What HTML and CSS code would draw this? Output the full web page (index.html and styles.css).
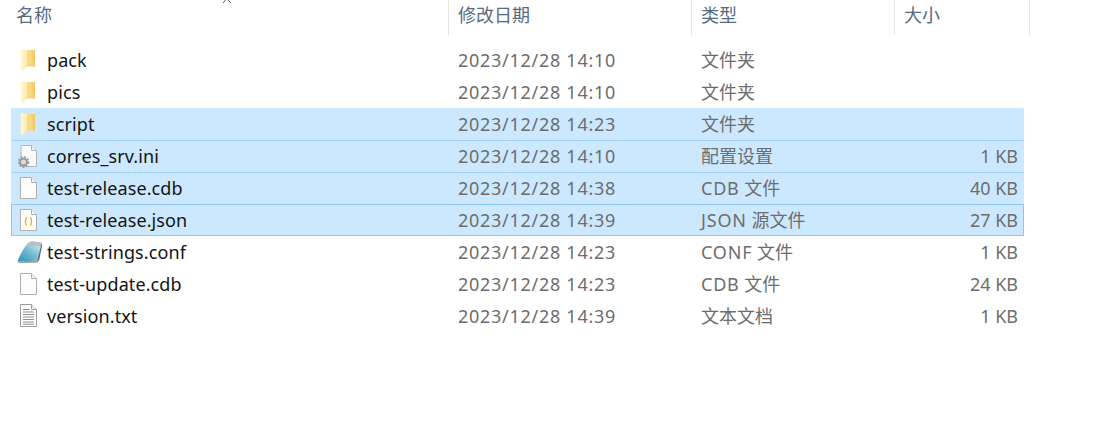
FILE: index.html
```html
<!DOCTYPE html>
<html lang="zh-CN">
<head>
<meta charset="utf-8">
<title>文件列表</title>
<link rel="stylesheet" href="styles.css">
</head>
<body>
<svg class="defs" width="0" height="0" aria-hidden="true">
  <defs>
    <linearGradient id="fold" x1="0" x2="1" y1="0" y2="0">
      <stop offset="0" stop-color="#fbe08f"/>
      <stop offset="0.6" stop-color="#f8d67c"/>
      <stop offset="1" stop-color="#f2c35c"/>
    </linearGradient>
    <linearGradient id="leaf" x1="0" x2="1" y1="0" y2="0">
      <stop offset="0" stop-color="#fff6d2"/>
      <stop offset="1" stop-color="#fde9a8"/>
    </linearGradient>
    <linearGradient id="note" x1="0" x2="1" y1="1" y2="0">
      <stop offset="0" stop-color="#2f8fb4"/>
      <stop offset="0.55" stop-color="#74bfd3"/>
      <stop offset="1" stop-color="#d5edf0"/>
    </linearGradient>
    <symbol id="i-folder" viewBox="0 0 20 24">
      <path d="M8 2h9v16.500H8z" fill="url(#fold)"/>
      <path d="M2.700 1.500h6l1 1v16l-1.500.6-3.200 3.900-2.300-1.500z" fill="url(#leaf)"/>
      <path d="M9.700 2.500v16" stroke="#f3d283" stroke-width=".7" fill="none"/>
    </symbol>
    <symbol id="i-page" viewBox="0 0 20 24">
      <path d="M2.500 1.500h11l5 5v16h-16z" fill="#fcfcfc" stroke="#aeaeae"/>
      <path d="M13.500 1.500v5h5" fill="#f2f2f2" stroke="#aeaeae"/>
    </symbol>
    <symbol id="i-ini" viewBox="0 0 20 24">
      <path d="M3 1.500h10.500l5 5v16H3z" fill="#fafafa" stroke="#b4b4b4"/>
      <path d="M13.500 1.500v5h5" fill="#eee" stroke="#b4b4b4"/>
      <circle cx="5.500" cy="18" r="4.800" fill="none" stroke="#a3a3a3" stroke-width="2.200" stroke-dasharray="2 1.200"/>
      <circle cx="5.500" cy="18" r="3.400" fill="#dcdcdc" stroke="#989898" stroke-width="1.800"/>
    </symbol>
    <symbol id="i-json" viewBox="0 0 20 24">
      <path d="M2.500 1.500h11l5 5v16h-16z" fill="#fffef6" stroke="#aeaeae"/>
      <path d="M13.500 1.500v5h5" fill="#f4f4f4" stroke="#aeaeae"/>
      <path d="M9 9.500c-1.500 0-1.100 1-1.100 2.300 0 1.200-.5 1.600-1.200 1.600.7 0 1.200.4 1.200 1.600 0 1.300-.4 2.300 1.100 2.300M12 9.500c1.500 0 1.100 1 1.100 2.300 0 1.200.5 1.600 1.200 1.600-.7 0-1.200.4-1.200 1.600 0 1.300.4 2.300-1.100 2.300" fill="none" stroke="#d2a92b" stroke-width="1.100"/>
    </symbol>
    <symbol id="i-conf" viewBox="0 0 26 24">
      <path d="M.5 21.500C3 15 6.500 8 10.500 3.500H23.500L21.500 20.500z" fill="url(#note)"/>
      <path d="M10.500 3.500C12 1.800 14 1.200 16 1.200L24.500 2.500 23.800 6 9 6z" fill="#b6bfc1"/>
      <path d="M24.500 2.500 25 6 22 21 20.500 20.500z" fill="#5c6a6e"/>
      <path d="M.5 21.500 21.500 20.500 20.800 22.500 2 23z" fill="#8c989b"/>
    </symbol>
    <symbol id="i-txt" viewBox="0 0 20 24">
      <path d="M2.500 .5h11l5 5v17h-16z" fill="#fff" stroke="#9c9c9c"/>
      <path d="M13.500 .5v5h5" fill="#efefef" stroke="#9c9c9c"/>
      <path d="M5 5.500h6.500M5 8h11M5 10.500h11M5 13h11M5 15.500h11M5 18h11M5 20.200h11" stroke="#8e8e8e" fill="none"/>
    </symbol>
  </defs>
</svg>
<svg class="clip-mark" width="14" height="4" viewBox="0 0 14 4" aria-hidden="true"><path d="M5.500 0 3 3M8 0l3 3" stroke="#555" fill="none"/></svg>
<main class="list">
  <header class="head">
    <div class="hcell hname">名称</div>
    <div class="hcell hdate">修改日期</div>
    <div class="hcell htype">类型</div>
    <div class="hcell hsize">大小</div>
  </header>
  <ul class="rows">
    <li class="row"><svg class="ico"><use href="#i-folder"/></svg><span class="name">pack</span><span class="date">2023/12/28 14:10</span><span class="type">文件夹</span><span class="size"></span></li>
    <li class="row"><svg class="ico"><use href="#i-folder"/></svg><span class="name">pics</span><span class="date">2023/12/28 14:10</span><span class="type">文件夹</span><span class="size"></span></li>
    <li class="row sel"><svg class="ico"><use href="#i-folder"/></svg><span class="name">script</span><span class="date">2023/12/28 14:23</span><span class="type">文件夹</span><span class="size"></span></li>
    <li class="row sel"><svg class="ico"><use href="#i-ini"/></svg><span class="name">corres_srv.ini</span><span class="date">2023/12/28 14:10</span><span class="type">配置设置</span><span class="size">1 KB</span></li>
    <li class="row sel"><svg class="ico"><use href="#i-page"/></svg><span class="name">test-release.cdb</span><span class="date">2023/12/28 14:38</span><span class="type"><span class="lat">CDB</span> 文件</span><span class="size">40 KB</span></li>
    <li class="row sel focus"><svg class="ico"><use href="#i-json"/></svg><span class="name">test-release.json</span><span class="date">2023/12/28 14:39</span><span class="type"><span class="lat">JSON</span> 源文件</span><span class="size">27 KB</span></li>
    <li class="row"><svg class="ico ico-wide"><use href="#i-conf"/></svg><span class="name">test-strings.conf</span><span class="date">2023/12/28 14:23</span><span class="type"><span class="lat">CONF</span> 文件</span><span class="size">1 KB</span></li>
    <li class="row"><svg class="ico"><use href="#i-page"/></svg><span class="name">test-update.cdb</span><span class="date">2023/12/28 14:23</span><span class="type"><span class="lat">CDB</span> 文件</span><span class="size">24 KB</span></li>
    <li class="row"><svg class="ico"><use href="#i-txt"/></svg><span class="name">version.txt</span><span class="date">2023/12/28 14:39</span><span class="type">文本文档</span><span class="size">1 KB</span></li>
  </ul>
</main>
</body>
</html>
```

FILE: styles.css
```css
html, body {
  margin: 0;
  padding: 0;
  background: #fff;
}
body {
  position: relative;
  width: 1098px;
  height: 444px;
  overflow: hidden;
  font-family: "Noto Sans", "Noto Sans CJK SC", sans-serif;
  font-size: 18px;
}
.defs {
  display: block;
  height: 0;
}
.clip-mark {
  position: absolute;
  left: 220px;
  top: 0;
}
.head {
  display: grid;
  grid-template-columns: 449px 243px 203px 135px;
  height: 35px;
  margin-bottom: 9px;
  color: #566a80;
}
.hcell {
  border-right: 1px solid #e5e5e5;
  line-height: 31px;
  box-sizing: border-box;
}
.hname { padding-left: 16px; }
.hdate { padding-left: 9px; }
.htype { padding-left: 9px; }
.hsize { padding-left: 9px; }
.rows {
  list-style: none;
  margin: 0 0 0 11px;
  padding: 0;
  width: 1013px;
}
.row {
  display: grid;
  grid-template-columns: 36px 401px 243px 203px 130px;
  height: 32px;
  box-sizing: border-box;
  align-items: center;
  line-height: 30px;
  color: #6d6d6d;
}
.sel {
  background: #cce8ff;
  box-shadow: inset 0 1px 0 #a5d2f5;
}
.row:not(.sel) + .sel { box-shadow: none; }
.focus {
  outline: 1px solid #8fc6ef;
  outline-offset: -1px;
}
.ico {
  width: 20px;
  height: 24px;
  margin-left: 7px;
}
.ico-wide {
  width: 26px;
  margin-left: 6px;
}
.name {
  color: #141414;
  letter-spacing: .1px;
}
.date {
  padding-left: 10px;
  letter-spacing: .72px;
}
.type { padding-left: 10px; }
.lat { letter-spacing: .8px; }
.size {
  text-align: right;
  padding-right: 6px;
}
```
